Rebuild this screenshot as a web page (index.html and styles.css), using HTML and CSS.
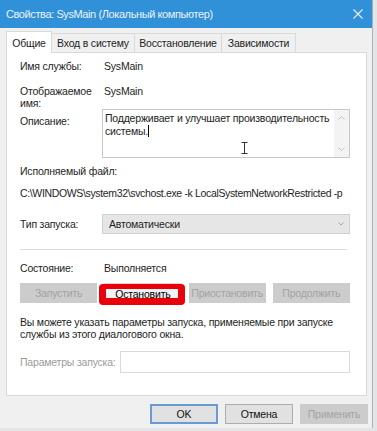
FILE: index.html
```html
<!DOCTYPE html>
<html lang="ru">
<head>
<meta charset="UTF-8">
<title>Свойства: SysMain</title>
<link rel="stylesheet" href="styles.css">
</head>
<body>
<div class="window">
  <div class="titlebar">
    <span class="title">Свойства: SysMain (Локальный компьютер)</span>
    <svg class="close" width="10" height="10" viewBox="0 0 10 10"><path d="M0.5 0.5L9.5 9.5M9.5 0.5L0.5 9.5" stroke="#e6f1fb" stroke-width="1.1" fill="none"/></svg>
  </div>

  <div class="tabs">
    <span class="tab active">Общие</span>
    <span class="tab t-login">Вход в систему</span>
    <span class="tab t-restore">Восстановление</span>
    <span class="tab t-deps">Зависимости</span>
  </div>

  <div class="panel">
    <div class="row r-name">
      <span class="label">Имя службы:</span>
      <span class="value">SysMain</span>
    </div>
    <div class="row r-display">
      <span class="label">Отображаемое<br>имя:</span>
      <span class="value">SysMain</span>
    </div>
    <div class="row r-desc">
      <span class="label pad">Описание:</span>
      <div class="textarea">
        <p class="ta-text">Поддерживает и улучшает производительность системы.<span class="caret"></span></p>
        <div class="scroll">
          <svg width="7" height="4" viewBox="0 0 7 4"><path d="M0.5 3.5L3.5 0.5L6.5 3.5" stroke="#c4c4c4" fill="none"/></svg>
          <svg width="7" height="4" viewBox="0 0 7 4"><path d="M0.5 0.5L3.5 3.5L6.5 0.5" stroke="#c4c4c4" fill="none"/></svg>
        </div>
        <svg class="ibeam" width="7" height="12" viewBox="0 0 7 12"><path d="M0.5 0.5H6.5M3.5 0.5V11.5M0.5 11.5H6.5" stroke="#333" stroke-width="1" fill="none"/></svg>
      </div>
    </div>

    <p class="line r-exe">Исполняемый файл:</p>
    <p class="line r-path">C:\WINDOWS\system32\svchost.exe -k LocalSystemNetworkRestricted -p</p>

    <div class="row r-type">
      <span class="label">Тип запуска:</span>
      <div class="select">
        <span>Автоматически</span>
        <svg width="6" height="4" viewBox="0 0 6 4"><path d="M0.5 0.5L3 3L5.5 0.5" stroke="#a8a8a8" fill="none"/></svg>
      </div>
    </div>

    <div class="sep"></div>

    <div class="row r-state">
      <span class="label">Состояние:</span>
      <span class="value">Выполняется</span>
    </div>

    <div class="actions">
      <button class="btn" disabled>Запустить</button>
      <button class="btn stop">Остановить<span class="highlight"></span></button>
      <button class="btn" disabled>Приостановить</button>
      <button class="btn" disabled>Продолжить</button>
    </div>

    <p class="hint">Вы можете указать параметры запуска, применяемые при запуске службы из этого диалогового окна.</p>

    <div class="row r-params">
      <span class="label dim">Параметры запуска:</span>
      <div class="input"></div>
    </div>
  </div>

  <div class="footer">
    <button class="fbtn ok">OK</button>
    <button class="fbtn">Отмена</button>
    <button class="fbtn" disabled>Применить</button>
  </div>
</div>
</body>
</html>
```

FILE: styles.css
```css
:root{
  --blue: #3090d8;
  --face: #f0f0f0;
  --line: #d9d9d9;
  --text: #1e1e1e;
  --dim: #9c9c9c;
  --font: "Liberation Sans", Arial, sans-serif;
}
*{ box-sizing: border-box; }
html,body{ margin:0; padding:0; }
body{
  background: #e3e5e7; font-family: var(--font); font-size: 10.5px; letter-spacing: -0.2px;
  color: var(--text); width: 377px; height: 431px; overflow: hidden;
}
p{ margin:0; }

.window{
  width: 373px; height: 428px; background: var(--face);
  border-right: 1px solid #a9b0b6;
  display:flex; flex-direction:column;
}
.titlebar{
  height: 28px; background: var(--blue); color: #eaf3fb;
  display:flex; align-items:center; justify-content:space-between;
  padding: 0 9px 0 6px; font-size: 11px; letter-spacing: -0.4px;
}

.tabs{ display:flex; align-items:flex-end; height: 24px; padding-left: 6px; }
.tab{
  height: 19px; display:flex; align-items:center; justify-content:center;
  border: 1px solid var(--line); border-left: none; border-bottom: none;
  background: var(--face); white-space: nowrap;
}
.tab.active{
  width: 46px; height: 22px; background:#fff; border-left: 1px solid var(--line);
  margin-bottom: -1px; position: relative; z-index: 1;
}
.t-login{ width: 83px; }
.t-restore{ width: 87px; }
.t-deps{ width: 74px; }

.panel{
  margin: 0 5px 0 6px; height: 344px; background:#fff;
  border: 1px solid var(--line);
  padding: 7px 16px 0 13px;
  display:flex; flex-direction:column;
}
.row{ display:flex; align-items:flex-start; line-height: 13px; }
.label{ width: 82px; flex-shrink:0; }
.label.pad{ padding-top: 6px; }
.label.dim{ color: var(--dim); width: auto; margin-right: 4px; padding-top: 5px; }
.value{ padding-left: 2px; }

.r-display{ margin-top: 12px; line-height: 12px; }
.textarea{
  flex:1; height: 49px; border: 1px solid #c8c8c8; position: relative;
  display:flex; justify-content:space-between;
}
.ta-text{ flex:1; padding: 2px 0 0 2px; line-height: 13px; }
.caret{ display:inline-block; width:1px; height: 12px; background:#000; vertical-align: -2px; }
.scroll{
  width: 15px; background:#f3f3f3; display:flex; flex-direction:column;
  align-items:center; justify-content:space-between; padding: 6px 0 6px;
}
.ibeam{ position:absolute; left: 138px; top: 32px; }

.line{ line-height: 13px; }
.r-exe{ margin-top: 7px; }
.r-path{ margin-top: 9px; white-space: nowrap; letter-spacing: -0.35px; }

.r-type{ margin-top: 14px; align-items:center; }
.select{
  flex:1; height: 20px; background:#e6e6e6; border:1px solid #d0d0d0;
  display:flex; align-items:center; justify-content:space-between; padding: 0 5px 0 6px;
}

.sep{ height:1px; background:#dcdcdc; margin-top: 15px; margin-right: 3px; }
.r-state{ margin-top: 12px; }

.actions{ display:flex; gap: 7px; margin-top: 8px; }
.btn{
  flex:1; height: 20px; font-family: var(--font); font-size: 10.5px; letter-spacing: -0.2px;
  border: 1px solid #cccccc; background:#cccccc; color:#a3a3a3; padding:0;
}
.btn.stop{ position:relative; background:#f2f2f2; border-color:#d6d6d6; color:#000; padding-top: 1px; }
.highlight{
  position:absolute; left:-6px; right:-4px; top:0; bottom:-3px;
  border-style: solid; border-color: #e8000b;
  border-width: 5px 7px 7px 7px; border-radius: 4px;
}

.hint{ margin-top: 13px; line-height: 12px; }
.r-params{ margin-top: 11px; }
.input{ flex:1; height: 22px; border:1px solid #dadada; }

.footer{
  display:flex; justify-content:flex-end; gap: 7px; padding: 8px 4px 0 0;
}
.fbtn{
  width: 68px; height: 20px; font-family: var(--font); font-size: 10.5px; letter-spacing: -0.2px;
  background:#e1e1e1; border:1px solid #adadad; color:#111; padding:0;
}
.fbtn.ok{ border: 2px solid #6a9bd0; }
.fbtn:disabled{ background:#cccccc; border-color:#cccccc; color:#a3a3a3; }
```
